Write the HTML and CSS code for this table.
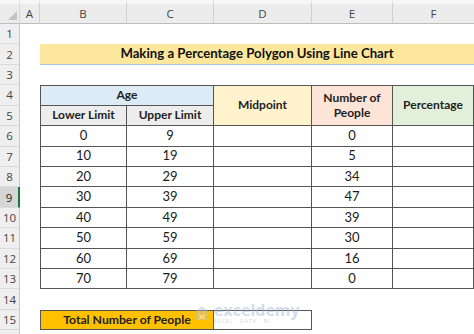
FILE: index.html
```html
<!DOCTYPE html>
<html>
<head>
<meta charset="utf-8">
<link rel="stylesheet" href="styles.css">
</head>
<body>
<div class="sheet">
  <div class="corner"><span class="tri"></span></div>
  <div class="colh">A</div>
  <div class="colh">B</div>
  <div class="colh">C</div>
  <div class="colh">D</div>
  <div class="colh">E</div>
  <div class="colh last">F</div>

  <div class="rowh">1</div><div class="c span6"></div>

  <div class="rowh">2</div><div class="c"></div>
  <div class="c span5 title">Making a Percentage Polygon Using Line Chart</div>

  <div class="rowh">3</div><div class="c span6"></div>

  <div class="rowh">4</div><div class="c"></div>
  <div class="c tc bt bl span2 age b">Age</div>
  <div class="c tc bt rspan2 mid b">Midpoint</div>
  <div class="c tc bt rspan2 num b">Number of<br>People</div>
  <div class="c tc bt rspan2 pct b">Percentage</div>

  <div class="rowh">5</div><div class="c"></div>
  <div class="c tc bl lim b">Lower Limit</div>
  <div class="c tc lim b">Upper Limit</div>

  <div class="rowh">6</div><div class="c"></div>
  <div class="c tc bl">0</div><div class="c tc">9</div><div class="c tc"></div><div class="c tc">0</div><div class="c tc"></div>

  <div class="rowh">7</div><div class="c"></div>
  <div class="c tc bl">10</div><div class="c tc">19</div><div class="c tc"></div><div class="c tc">5</div><div class="c tc"></div>

  <div class="rowh">8</div><div class="c"></div>
  <div class="c tc bl">20</div><div class="c tc">29</div><div class="c tc"></div><div class="c tc">34</div><div class="c tc"></div>

  <div class="rowh sel">9</div><div class="c"></div>
  <div class="c tc bl">30</div><div class="c tc">39</div><div class="c tc"></div><div class="c tc">47</div><div class="c tc"></div>

  <div class="rowh">10</div><div class="c"></div>
  <div class="c tc bl">40</div><div class="c tc">49</div><div class="c tc"></div><div class="c tc">39</div><div class="c tc"></div>

  <div class="rowh">11</div><div class="c"></div>
  <div class="c tc bl">50</div><div class="c tc">59</div><div class="c tc"></div><div class="c tc">30</div><div class="c tc"></div>

  <div class="rowh">12</div><div class="c"></div>
  <div class="c tc bl">60</div><div class="c tc">69</div><div class="c tc"></div><div class="c tc">16</div><div class="c tc"></div>

  <div class="rowh">13</div><div class="c"></div>
  <div class="c tc bl">70</div><div class="c tc">79</div><div class="c tc"></div><div class="c tc">0</div><div class="c tc"></div>

  <div class="rowh">14</div><div class="c span6"></div>

  <div class="rowh">15</div><div class="c"></div>
  <div class="c tc bt bl span2 total b">Total Number of People</div>
  <div class="c tc bt"></div>
  <div class="c"></div><div class="c"></div>

  <div class="rowh"></div><div class="c span6"></div>

  <div class="mark">
    <svg class="mark-icon" width="20" height="18" viewBox="0 0 26 22">
      <path d="M13 2 L24 11 L21 11 L21 20 L5 20 L5 11 L2 11 Z" fill="#b7c0cf"/>
      <path d="M9 13 L17 19 M17 13 L9 19" stroke="#fff" stroke-width="2"/>
    </svg>
    <div class="mark-text">
      <span class="mark-name">exceldemy</span>
      <span class="mark-sub">EXCEL · DATA · BI</span>
    </div>
  </div>
</div>
</body>
</html>
```

FILE: styles.css
```css
html, body {
  margin: 0;
  padding: 0;
  background: #fff;
}
body {
  font-family: Lato, "Open Sans", sans-serif;
  font-size: 13px;
  color: #1a1a1a;
}
.sheet {
  position: relative;
  width: 474px;
  height: 334px;
  overflow: hidden;
  display: grid;
  grid-template-columns: 20px 20px 87px 87px 98px 81px 81px;
  grid-template-rows: 24px repeat(16, 20.43px);
}
.corner {
  background: #ececec;
  border-top: 4px solid #f6f6f6;
  border-right: 1px solid #d4d4d4;
  border-bottom: 1px solid #bdbdbd;
  box-sizing: border-box;
  position: relative;
}
.tri {
  position: absolute;
  right: 2px;
  bottom: 3px;
  width: 0;
  height: 0;
  border-left: 9px solid transparent;
  border-bottom: 9px solid #c4c4c4;
}
.colh {
  background: #ececec;
  border-top: 4px solid #f6f6f6;
  border-right: 1px solid #d0d0d0;
  border-bottom: 1px solid #bdbdbd;
  box-sizing: border-box;
  display: flex;
  align-items: center;
  justify-content: center;
  font-family: "Open Sans", Lato, sans-serif;
  font-size: 11.5px;
  color: #444;
}
.colh.last { border-right: none; }
.rowh {
  background: #efefef;
  border-right: 1px solid #c8c8c8;
  border-bottom: 1px solid #dadada;
  box-sizing: border-box;
  display: flex;
  align-items: center;
  justify-content: center;
  font-family: "Open Sans", Lato, sans-serif;
  font-size: 11.5px;
  color: #444;
}
.rowh.sel {
  background: #d6d6d6;
  border-right: 2px solid #217346;
  color: #222;
}
.c {
  box-sizing: border-box;
  display: flex;
  align-items: center;
  justify-content: center;
  text-align: center;
  line-height: 1.2;
  white-space: nowrap;
}
.span2 { grid-column: span 2; }
.span5 { grid-column: span 5; }
.span6 { grid-column: span 6; }
.rspan2 { grid-row: span 2; }
.b { font-weight: 700; font-size: 12px; color: #222; }
.tc {
  border-right: 1px solid #555;
  border-bottom: 1px solid #555;
}
.bt { border-top: 1px solid #555; }
.bl { border-left: 1px solid #555; }
.title {
  background: #fde79c;
  border-bottom: 1px solid #a9c5e4;
  font-weight: 700;
  font-size: 13.2px;
  color: #111;
}
.age { background: #ddebf7; }
.lim { background: #ededed; }
.mid { background: #fff2cc; }
.num { background: #fce4d6; }
.pct { background: #e2efda; }
.total { background: #ffc000; font-size: 12.2px; }
.mark {
  position: absolute;
  left: 192px;
  top: 302px;
  display: flex;
  align-items: center;
  gap: 2px;
  opacity: 0.45;
  pointer-events: none;
}
.mark-text {
  display: flex;
  flex-direction: column;
  line-height: 1;
}
.mark-name {
  font-family: "Open Sans", sans-serif;
  font-weight: 700;
  font-size: 16px;
  color: #9fb3d6;
}
.mark-sub {
  font-family: "Open Sans", sans-serif;
  font-size: 5px;
  color: #9aa4b4;
  letter-spacing: 1px;
  margin-top: 1px;
}
```
